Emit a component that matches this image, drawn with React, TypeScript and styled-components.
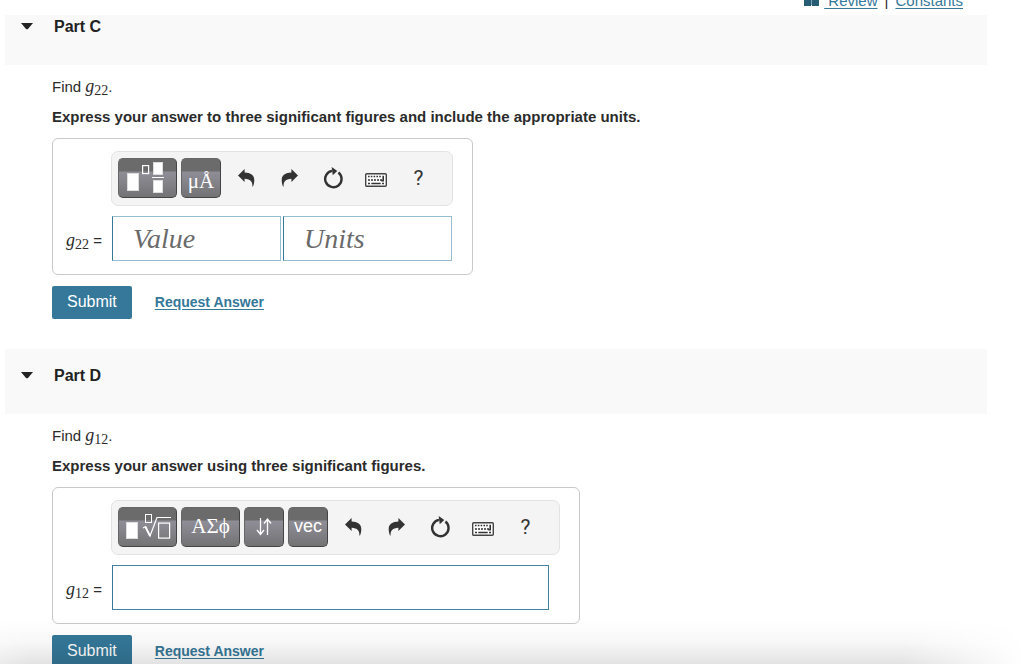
import React from "react";
import styled, { createGlobalStyle } from "styled-components";

const sans = `"Liberation Sans", Arial, Helvetica, sans-serif`;
const serif = `"Liberation Serif", "Times New Roman", serif`;

const GlobalStyle = createGlobalStyle`
  *, *::before, *::after { box-sizing: border-box; }
  body { margin: 0; background: #fff; color: #2b2b2b; font: 15px/20px ${sans}; }
`;

const Page = styled.div`
  height: 100vh;
  overflow: hidden;
  padding: 0 37px 0 5px;
`;

const TopBar = styled.nav`
  position: relative;
  z-index: 1;
  display: flex;
  align-items: flex-end;
  justify-content: flex-end;
  height: 15px;
  padding: 0 24px 4px 0;
  background: #fff;
`;

const TopLink = styled.a`
  color: #357899;
  text-underline-offset: 2px;
  white-space: pre;
`;

const BookIcon = styled.svg`
  margin: 0 5px 4px 0;
  flex: none;
`;

const Divider = styled.span`
  padding: 0 7px;
`;

const Main = styled.main`
  margin-top: -15px;
`;

const Part = styled.section`
  height: 349px;
`;

const PartHeader = styled.header`
  display: flex;
  align-items: flex-start;
  height: 65px;
  padding: 17px 16px;
  background: #f9f9f9;
`;

const PartToggle = styled.button`
  display: flex;
  align-items: center;
  gap: 21px;
  padding: 0;
  border: 0;
  background: none;
  color: #222;
  font: bold 16px/20px ${sans};
`;

const PartBody = styled.div`
  padding: 11px 0 0 47px;
`;

const Line = styled.p<{ $bold?: boolean }>`
  margin: 0 0 ${(p) => (p.$bold ? 11 : 10)}px;
  font-weight: ${(p) => (p.$bold ? "bold" : "normal")};
`;

const MathVar = styled.span`
  font-family: ${serif};
  font-style: italic;
  font-size: 18px;
  line-height: 20px;
`;

const Sub = styled.sub`
  position: relative;
  top: 3px;
  vertical-align: baseline;
  font-size: 14px;
  font-style: normal;
  line-height: 1;
`;

const AnswerBox = styled.div`
  width: fit-content;
  padding: 12px 19px 13px 0;
  border: 1px solid #c9c9c9;
  border-radius: 6px;
  display: grid;
  grid-template-columns: 58px auto;
  row-gap: 10px;
  align-items: center;
`;

const Toolbar = styled.div`
  grid-column: 2;
  display: flex;
  align-items: center;
  gap: 4px;
  height: 55px;
  padding: 0 12px 2px 6px;
  border: 1px solid #e3e3e3;
  border-radius: 7px;
  background: #f4f4f4;
`;

const Tile = styled.button<{ $width: number; $face?: string; $size?: number; $low?: boolean }>`
  display: flex;
  align-items: center;
  justify-content: center;
  flex: none;
  width: ${(p) => p.$width}px;
  height: 40px;
  padding: ${(p) => (p.$low ? "6px 0 0" : "0 0 2px")};
  border: 1px solid #666;
  border-right-color: #444;
  border-bottom-color: #444;
  border-radius: 5px;
  background: linear-gradient(#6b6b6b 0 12px, #8f8e97 13px, #737375 100%);
  color: #fff;
  font-family: ${(p) => p.$face ?? sans};
  font-size: ${(p) => p.$size ?? 18}px;
  line-height: 24px;
`;

const Actions = styled.div`
  display: flex;
`;

const Action = styled.button`
  display: flex;
  align-items: center;
  justify-content: center;
  width: 43px;
  height: 40px;
  padding: 0;
  border: 0;
  background: none;
  color: #333;
  font: 21px/24px Roboto, ${sans};
`;

const FieldLabel = styled.label`
  padding: 4px 0 0 13px;
  white-space: nowrap;
`;

const Fields = styled.div`
  display: flex;
  gap: 2px;
  padding-left: 1px;
`;

const Field = styled.input<{ $width: number; $soft?: boolean }>`
  width: ${(p) => p.$width}px;
  height: 45px;
  padding: 0 20px;
  border: 1px solid ${(p) => (p.$soft ? "#96bdd0" : "#4583a3")};
  border-left-color: #357899;
  border-radius: 0;
  background: #fff;
  font: italic 28px/40px ${serif};
  &::placeholder { color: #6a6a6a; opacity: 1; }
`;

const Footer = styled.div`
  display: flex;
  align-items: center;
  gap: 23px;
  margin-top: 11px;
`;

const Submit = styled.button`
  height: 33px;
  padding: 0 15px 2px;
  border: 0;
  border-radius: 2px;
  background: #357899;
  color: #fff;
  font: 16px/20px ${sans};
`;

const Request = styled.a`
  padding-bottom: 2px;
  color: #357899;
  font-size: 14px;
  font-weight: bold;
  text-underline-offset: 2px;
`;

const BottomShade = styled.div`
  position: fixed;
  inset: auto 0 0 0;
  height: 44px;
  pointer-events: none;
  background: linear-gradient(transparent, rgba(0, 0, 0, 0.03) 50%, rgba(0, 0, 0, 0.11));
  mask-image: linear-gradient(to right, rgba(0, 0, 0, 0.7), #000 3%, #000 88%, transparent);
`;

const Caret = () => (
  <svg width="12" height="8" viewBox="0 0 12 8" aria-hidden="true">
    <path d="M0 0h12L7.2 5.7Q6 6.9 4.8 5.7Z" fill="#222" />
  </svg>
);

const Arrow = ({ flip }: { flip?: boolean }) => (
  <svg width="17" height="18" viewBox="0 0 17 18" aria-hidden="true">
    <path
      transform={flip ? "translate(17 0) scale(-1 1)" : undefined}
      d="M0 6.5 6.6 0v3.5C12.5 3.8 16.3 6 16.3 11c0 2.5-.5 4.6-1.3 6.5h-.6c.2-4.8-1.8-7.6-7.8-7.8v3.2Z"
      fill="#333"
    />
  </svg>
);

const ResetIcon = () => (
  <svg width="20" height="22" viewBox="0 0 20 22" aria-hidden="true">
    <path d="M15.4 5.5A8.2 8.2 0 1 1 9 3.9" fill="none" stroke="#333" strokeWidth="2.4" />
    <path d="M8.7 0 14.3 4 9.7 8.2Z" fill="#333" />
  </svg>
);

const KeyboardIcon = () => (
  <svg width="22" height="18" viewBox="0 0 22 18" aria-hidden="true">
    <rect x=".7" y="4.7" width="20.6" height="12.6" rx="1" fill="#fff" stroke="#444" strokeWidth="1.4" />
    <path d="M3 7.5h13" stroke="#333" strokeWidth="1.6" strokeDasharray="1.6 1.2" />
    <path d="M3 11h14" stroke="#333" strokeWidth="1.6" strokeDasharray="2 1" />
    <path d="M18.2 6.7v5h-2" fill="none" stroke="#333" strokeWidth="1.6" />
    <path d="M3 14.4h2M6.3 14.4h9.4M17 14.4h2" stroke="#333" strokeWidth="1.5" />
  </svg>
);

const TemplateIcon = () => (
  <svg width="42" height="32" viewBox="0 0 42 32" aria-hidden="true">
    <g fill="#fff" stroke="#ddd">
      <rect x=".5" y="12.5" width="11" height="17" />
      <rect x="26.5" y="1.5" width="9" height="12" />
      <rect x="26.5" y="19.5" width="9" height="12" />
    </g>
    <path d="M25 16.5h12" stroke="#fff" />
    <rect x="15.6" y="4.6" width="6" height="8" fill="none" stroke="#fff" strokeWidth="1.2" />
  </svg>
);

const RootIcon = () => (
  <svg width="46" height="30" viewBox="0 0 46 30" aria-hidden="true">
    <rect x="1.5" y="11.5" width="11" height="16" fill="#fff" stroke="#ddd" />
    <rect x="20.5" y="3.5" width="6" height="8" fill="none" stroke="#fff" />
    <path d="m18 17 2.5-1.5 4.5 9.5L32 6.5h14" fill="none" stroke="#fff" strokeWidth="1.2" />
    <path d="m20.5 16 4.5 9" stroke="#fff" strokeWidth="1.8" />
    <rect x="33.6" y="12.1" width="11" height="15" fill="none" stroke="#fff" strokeWidth="1.2" />
  </svg>
);

const UpDownIcon = () => (
  <svg width="16" height="20" viewBox="0 0 16 20" aria-hidden="true">
    <path d="M4.5 2v16M1 14l3.5 4.5L8 14M11.5 19V3.5M8 7.5 11.5 3 15 7.5" fill="none" stroke="#fff" strokeWidth="1.3" />
  </svg>
);

const HistoryActions = () => (
  <Actions>
    <Action aria-label="Undo"><Arrow /></Action>
    <Action aria-label="Redo"><Arrow flip /></Action>
    <Action aria-label="Reset"><ResetIcon /></Action>
    <Action aria-label="Keyboard shortcuts"><KeyboardIcon /></Action>
    <Action aria-label="Help">?</Action>
  </Actions>
);

const G = ({ index }: { index: string }) => (
  <MathVar>g<Sub>{index}</Sub></MathVar>
);

interface QuestionProps {
  title: string;
  index: string;
  instruction: string;
  tools: React.ReactNode;
  fields: React.ReactNode;
  fieldId: string;
}

const Question = ({ title, index, instruction, tools, fields, fieldId }: QuestionProps) => (
  <Part>
    <PartHeader>
      <PartToggle aria-expanded="true"><Caret />{title}</PartToggle>
    </PartHeader>
    <PartBody>
      <Line>Find <G index={index} />.</Line>
      <Line $bold>{instruction}</Line>
      <AnswerBox>
        <Toolbar role="toolbar">
          {tools}
          <HistoryActions />
        </Toolbar>
        <FieldLabel htmlFor={fieldId}><G index={index} /> =</FieldLabel>
        <Fields>{fields}</Fields>
      </AnswerBox>
      <Footer>
        <Submit>Submit</Submit>
        <Request href="#">Request Answer</Request>
      </Footer>
    </PartBody>
  </Part>
);

export default function App() {
  return (
    <Page>
      <GlobalStyle />
      <TopBar>
        <BookIcon width="15" height="12" viewBox="0 0 15 12" aria-hidden="true">
          <path d="M0 0h7v11H0ZM8 0h7v11H8Z" fill="#265c73" />
          <path d="M7 0h1v10H7Z" fill="#7ea3b3" />
        </BookIcon>
        <TopLink href="#"> Review</TopLink>
        <Divider>|</Divider>
        <TopLink href="#">Constants</TopLink>
      </TopBar>
      <Main>
        <Question
          title="Part C"
          index="22"
          instruction="Express your answer to three significant figures and include the appropriate units."
          fieldId="g22"
          tools={
            <>
              <Tile $width={59} aria-label="Templates"><TemplateIcon /></Tile>
              <Tile $width={40} $face={serif} $size={21} $low>μÅ</Tile>
            </>
          }
          fields={
            <>
              <Field id="g22" $width={169} $soft placeholder="Value" />
              <Field aria-label="Units" $width={169} $soft placeholder="Units" />
            </>
          }
        />
        <Question
          title="Part D"
          index="12"
          instruction="Express your answer using three significant figures."
          fieldId="g12"
          tools={
            <>
              <Tile $width={59} aria-label="Templates"><RootIcon /></Tile>
              <Tile $width={59} $face={serif} $size={21}>ΑΣϕ</Tile>
              <Tile $width={40} aria-label="Arrows"><UpDownIcon /></Tile>
              <Tile $width={40}>vec</Tile>
            </>
          }
          fields={<Field id="g12" $width={437} />}
        />
      </Main>
      <BottomShade />
    </Page>
  );
}
